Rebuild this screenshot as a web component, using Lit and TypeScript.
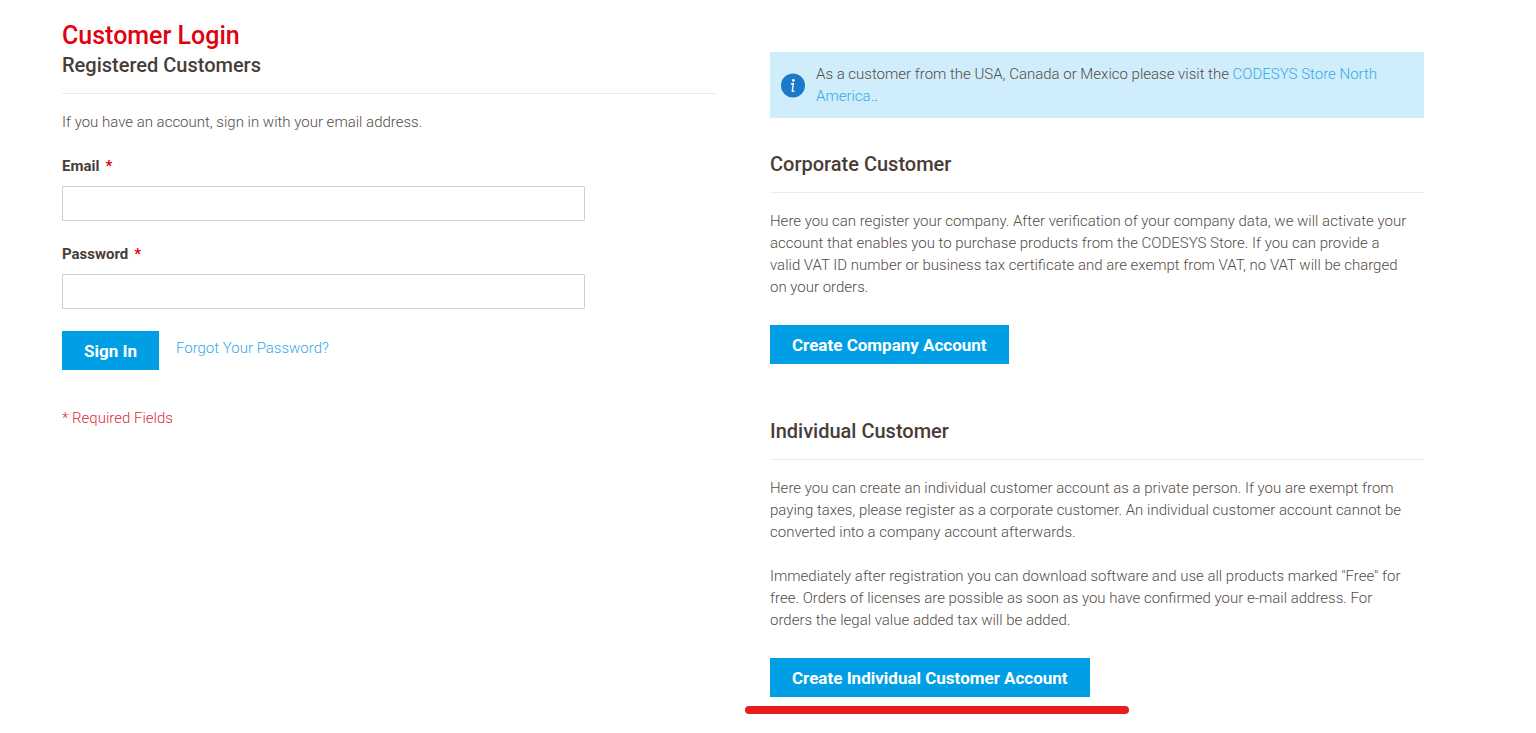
import { LitElement, html, css } from "lit";
import { customElement } from "lit/decorators.js";

@customElement("app-root")
export class AppRoot extends LitElement {
  static styles = css`
    :host {
      display: block;
      box-sizing: border-box;
      background: #fff;
      color: #483d36;
      font: 300 15px/22px Roboto, "Open Sans", sans-serif;
    }
    *, *::before { box-sizing: border-box; }
    h1, h2, p { margin: 0; }
    a { color: #36a9e6; text-decoration: none; }
    .page {
      display: grid;
      grid-template-columns: 1fr 1fr;
      column-gap: 54px;
      padding: 21px 112px 20px 62px;
    }
    .title { font-size: 25px; line-height: 30px; font-weight: 500; color: #e3000f; }
    .heading {
      font-size: 20px;
      line-height: 28px;
      font-weight: 500;
      padding-bottom: 14px;
      border-bottom: 1px solid #ebebeb;
    }
    .intro, .text, .notice p { color: #554c46; }
    .intro { margin-top: 17px; }
    .field { display: flex; flex-direction: column; width: 80%; margin-top: 22px; }
    .label { font-weight: 700; margin-bottom: 9px; }
    .star { color: #e3000f; margin-left: 6px; }
    .input {
      height: 35px;
      border: 1px solid #cfcfcf;
      border-radius: 1px;
      background: #fff;
      padding: 0 9px;
      font: inherit;
    }
    .actions { display: flex; gap: 17px; margin-top: 22px; }
    .forgot { margin-top: 6px; }
    .button {
      height: 39px;
      border: 0;
      padding: 0 22px;
      background: #009fe5;
      color: #fff;
      font: 700 17px/22px Roboto, sans-serif;
      cursor: pointer;
    }
    .required { margin-top: 37px; color: #e02b3c; }
    .notice {
      display: flex;
      align-items: center;
      gap: 11px;
      margin: 31px 0 32px;
      padding: 11px 22px 11px 11px;
      background: #cfedfb;
    }
    .icon { flex: none; width: 24px; height: 25px; }
    .section + .section { margin-top: 53px; }
    .section .text { margin-top: 17px; padding-right: 14px; }
    .section .text + .text { margin-top: 22px; }
    .section .button { margin-top: 27px; }
    .marked { position: relative; width: fit-content; }
    .stroke { position: absolute; left: -25px; right: -39px; bottom: -17px; height: 8px; border-radius: 4px; background: #e81c1c; }
  `;

  render() {
    return html`
      <main class="page">
        <section>
          <h1 class="title">Customer Login</h1>
          <h2 class="heading">Registered Customers</h2>
          <form @submit=${(e: Event) => e.preventDefault()}>
            <p class="intro">If you have an account, sign in with your email address.</p>
            <div class="field">
              <label class="label" for="email">Email<span class="star">*</span></label>
              <input class="input" id="email" type="email" autocomplete="off" />
            </div>
            <div class="field">
              <label class="label" for="password">Password<span class="star">*</span></label>
              <input class="input" id="password" type="password" autocomplete="off" />
            </div>
            <div class="actions">
              <button class="button" type="submit">Sign In</button>
              <a class="forgot" href="#">Forgot Your Password?</a>
            </div>
            <p class="required">* Required Fields</p>
          </form>
        </section>
        <section>
          <div class="notice">
            <svg class="icon" viewBox="0 0 25 25" aria-hidden="true">
              <circle cx="12.5" cy="12.5" r="12.5" fill="#1c78c8" />
              <circle cx="12.9" cy="7.2" r="1.4" fill="#fff" />
              <path d="M10.3 10.9 L12.9 10.4 L11.7 18 Q11.8 19.2 14 18.2" fill="none" stroke="#fff" stroke-width="1.4" />
            </svg>
            <p>As a customer from the USA, Canada or Mexico please visit the <a href="#">CODESYS Store North America.</a>.</p>
          </div>
          <section class="section">
            <h2 class="heading">Corporate Customer</h2>
            <p class="text">Here you can register your company. After verification of your company data, we will activate your account that enables you to purchase products from the CODESYS Store. If you can provide a valid VAT ID number or business tax certificate and are exempt from VAT, no VAT will be charged on your orders.</p>
            <button class="button" type="button">Create Company Account</button>
          </section>
          <section class="section">
            <h2 class="heading">Individual Customer</h2>
            <p class="text">Here you can create an individual customer account as a private person. If you are exempt from paying taxes, please register as a corporate customer. An individual customer account cannot be converted into a company account afterwards.</p>
            <p class="text">Immediately after registration you can download software and use all products marked "Free" for free. Orders of licenses are possible as soon as you have confirmed your e-mail address. For orders the legal value added tax will be added.</p>
            <div class="marked">
              <button class="button" type="button">Create Individual Customer Account</button>
              <span class="stroke"></span>
            </div>
          </section>
        </section>
      </main>
    `;
  }
}
